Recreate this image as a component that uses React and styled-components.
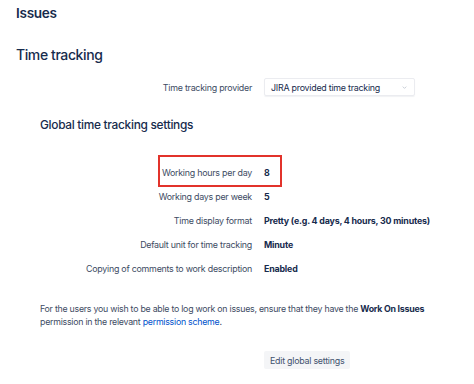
import React from "react";
import styled, { createGlobalStyle } from "styled-components";

const GlobalStyle = createGlobalStyle`
  body {
    margin: 0;
    background: #fff;
    font-family: Inter, "Noto Sans", Arial, sans-serif;
    color: #172b4d;
  }
`;

const rows = [
  { label: "Working hours per day", value: "8", marked: true },
  { label: "Working days per week", value: "5" },
  { label: "Time display format", value: "Pretty (e.g. 4 days, 4 hours, 30 minutes)" },
  { label: "Default unit for time tracking", value: "Minute" },
  { label: "Copying of comments to work description", value: "Enabled" },
];

const App = () => {
  return (
    <Page>
      <GlobalStyle />
      <Title>Issues</Title>
      <SubTitle>Time tracking</SubTitle>
      <Row $label={236}>
        <Label>Time tracking provider</Label>
        <Select>
          JIRA provided time tracking
          <Caret viewBox="0 0 8 8">
            <path d="M2 3l2 2 2-2" fill="none" stroke="#c1c7d0" strokeWidth="1" />
          </Caret>
        </Select>
      </Row>
      <Section>
        <SectionHead>Global time tracking settings</SectionHead>
        <Settings>
          {rows.map((r) => (
            <Row key={r.label} $label={212} $tall>
              {r.marked && <Highlight />}
              <Label>{r.label}</Label>
              <Value>{r.value}</Value>
            </Row>
          ))}
        </Settings>
        <Note>
          For the users you wish to be able to log work on issues, ensure that they have the{" "}
          <b>Work On Issues</b> permission in the relevant <Link>permission scheme</Link>.
        </Note>
        <Row $label={212}>
          <span />
          <div>
            <Button>Edit global settings</Button>
          </div>
        </Row>
      </Section>
    </Page>
  );
};

export default App;

const Page = styled.div`
  padding: 3px 16px 0 16px;
`;

const Title = styled.h1`
  margin: 0;
  font-size: 13.6px;
  font-weight: 600;
  line-height: 20px;
  letter-spacing: -0.3px;
`;

const SubTitle = styled.h2`
  margin: 21px 0 0 0;
  font-size: 14px;
  font-weight: 500;
  line-height: 22px;
  letter-spacing: -0.4px;
`;

const Row = styled.div`
  position: relative;
  display: grid;
  grid-template-columns: ${(p) => p.$label}px 1fr;
  column-gap: 12px;
  align-items: center;
  height: ${(p) => (p.$tall ? "24px" : "auto")};
  margin-top: ${(p) => (p.$tall ? "0" : "12px")};
`;

const Label = styled.div`
  text-align: right;
  font-size: 8.9px;
  letter-spacing: -0.25px;
  color: #3d4b63;
  white-space: nowrap;
`;

const Value = styled.div`
  font-size: 8.9px;
  letter-spacing: -0.2px;
  font-weight: 700;
  color: #172b4d;
  white-space: nowrap;
`;

const Select = styled.div`
  position: relative;
  box-sizing: border-box;
  width: 151px;
  height: 18px;
  padding: 0 6px;
  display: flex;
  align-items: center;
  font-size: 8.9px;
  letter-spacing: -0.25px;
  color: #172b4d;
  border: 1px solid #ebecf0;
  border-radius: 2px;
  box-shadow: 0 1px 1px rgba(9, 30, 66, 0.06);
`;

const Caret = styled.svg`
  position: absolute;
  right: 6px;
  top: 5px;
  width: 7px;
  height: 7px;
`;

const Section = styled.div`
  padding-left: 24px;
`;

const SectionHead = styled.h3`
  margin: 20px 0 0 0;
  font-size: 11.9px;
  font-weight: 500;
  line-height: 18px;
  letter-spacing: -0.3px;
`;

const Settings = styled.div`
  margin-top: 26px;
`;

const Highlight = styled.div`
  position: absolute;
  left: 118px;
  width: 124px;
  top: -5px;
  height: 32px;
  box-sizing: border-box;
  border: 2px solid #e2332b;
  pointer-events: none;
`;

const Note = styled.p`
  margin: 22px 0 0 0;
  font-size: 8.8px;
  letter-spacing: -0.25px;
  line-height: 13px;
  color: #3d4b63;
  max-width: 400px;

  b {
    color: #172b4d;
    font-weight: 700;
  }
`;

const Link = styled.a`
  color: #0052cc;
  text-decoration: none;
`;

const Button = styled.button`
  margin-top: 11px;
  height: 18px;
  padding: 0 6px;
  border: none;
  border-radius: 2px;
  background: #f4f5f7;
  color: #42526e;
  font-family: inherit;
  font-size: 8.9px;
  letter-spacing: -0.25px;
`;
